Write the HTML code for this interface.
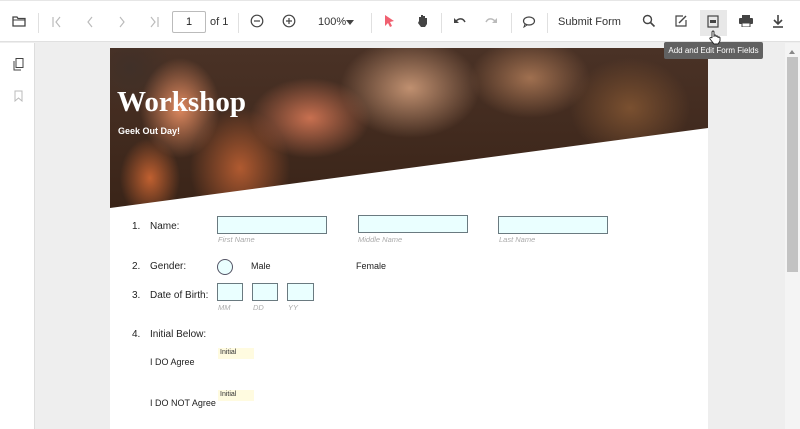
<!DOCTYPE html>
<html><head><style>
*{margin:0;padding:0;box-sizing:border-box}
body{width:800px;height:429px;overflow:hidden;background:#eeeeee;font-family:"Liberation Sans",sans-serif;position:relative}
.tb{position:absolute;left:0;top:0;width:800px;height:42px;background:#fff;border-bottom:1px solid #e0e0e0;border-top:1px solid #e6e6e6}
.ic{position:absolute;top:14px;color:#444;font-size:13px}
.sep{position:absolute;top:12px;width:1px;height:20px;background:#e0e0e0}
.side{position:absolute;left:0;top:43px;width:35px;height:386px;background:#fff;border-right:1px solid #ddd}
.page{position:absolute;left:110px;top:48px;width:598px;height:381px;background:#fff;overflow:hidden}
.hdr{position:absolute;left:0;top:0;width:598px;height:160px;background:
radial-gradient(ellipse 40px 50px at 70px 60px,#e08a60,transparent),
radial-gradient(ellipse 60px 40px at 200px 70px,#c87050,transparent),
radial-gradient(ellipse 50px 60px at 130px 120px,#b05a30,transparent),
radial-gradient(ellipse 30px 40px at 40px 130px,#c06030,transparent),
radial-gradient(ellipse 70px 50px at 300px 40px,#c09070,transparent),
radial-gradient(ellipse 60px 40px at 420px 30px,#a07050,transparent),
radial-gradient(ellipse 60px 50px at 520px 60px,#7a5030,transparent),
radial-gradient(ellipse 40px 40px at 20px 20px,#403028,transparent),
linear-gradient(180deg,#4a3226,#3a2418)}
.lbl{position:absolute;font-size:10px;color:#222}
.fld{position:absolute;background:#eaffff;border:1px solid #6a7a80}
.ph{position:absolute;font-size:7.5px;color:#aaa;font-style:italic}
.ini{position:absolute;width:36px;height:11px;background:#fffbe0;font-size:7px;color:#333;padding:1px 2px}
</style></head><body>
<div class="tb">
<svg style="position:absolute;left:12px;top:14px" width="14" height="12"><path d="M1 2h4l1 1.5h7v7.5H1z" fill="none" stroke="#444" stroke-width="1.3"/><path d="M1 5h12" stroke="#444"/></svg>
<div class="sep" style="left:38px"></div>
<svg style="position:absolute;left:52px;top:15px" width="10" height="12"><path d="M1 1v10M8 1L4 6l4 5" fill="none" stroke="#bbb" stroke-width="1.2"/></svg>
<svg style="position:absolute;left:86px;top:15px" width="8" height="12"><path d="M6 1L2 6l4 5" fill="none" stroke="#bbb" stroke-width="1.2"/></svg>
<svg style="position:absolute;left:118px;top:15px" width="8" height="12"><path d="M2 1l4 5-4 5" fill="none" stroke="#bbb" stroke-width="1.2"/></svg>
<svg style="position:absolute;left:149px;top:15px" width="10" height="12"><path d="M9 1v10M2 1l4 5-4 5" fill="none" stroke="#bbb" stroke-width="1.2"/></svg>
<div style="position:absolute;left:172px;top:10px;width:34px;height:22px;border:1px solid #bbb;border-radius:2px;font-size:11px;text-align:center;line-height:20px;color:#222">1</div>
<div class="ic" style="left:210px;font-size:11px;top:15px;color:#333">of 1</div>
<div class="sep" style="left:238px"></div>
<svg style="position:absolute;left:250px;top:13px" width="14" height="14"><circle cx="7" cy="7" r="5.8" fill="none" stroke="#444" stroke-width="1.2"/><path d="M4 7h6" stroke="#444" stroke-width="1.2"/></svg>
<svg style="position:absolute;left:282px;top:13px" width="14" height="14"><circle cx="7" cy="7" r="5.8" fill="none" stroke="#444" stroke-width="1.2"/><path d="M4 7h6M7 4v6" stroke="#444" stroke-width="1.2"/></svg>
<div class="ic" style="left:318px;font-size:11px;top:15px;color:#333">100%</div>
<div style="position:absolute;left:346px;top:19px;border:4.5px solid transparent;border-top:5px solid #444"></div>
<div class="sep" style="left:371px"></div>
<svg style="position:absolute;left:384px;top:13px" width="12" height="14"><path d="M1 1l9 6-4 1 2 4-2 1-2-4-3 3z" fill="#f06070"/></svg>
<svg style="position:absolute;left:416px;top:12px" width="14" height="15"><path d="M3 8V4h2v4V2h2v6V3h2v5V5h2v6l-2 3H5L2 10z" fill="#444"/></svg>
<div class="sep" style="left:441px"></div>
<svg style="position:absolute;left:453px;top:15px" width="13" height="10"><path d="M3 5c3-3 7-3 9 1" fill="none" stroke="#444" stroke-width="1.5"/><path d="M1 2v5h5z" fill="#444"/></svg>
<svg style="position:absolute;left:485px;top:15px" width="13" height="10"><path d="M10 5C7 2 3 2 1 6" fill="none" stroke="#bbb" stroke-width="1.5"/><path d="M12 2v5H7z" fill="#bbb"/></svg>
<div class="sep" style="left:511px"></div>
<svg style="position:absolute;left:522px;top:15px" width="14" height="12"><ellipse cx="7" cy="5" rx="5.5" ry="4" fill="none" stroke="#444" stroke-width="1.2"/><path d="M3 8l-1 3 3-2" fill="none" stroke="#444"/></svg>
<div class="sep" style="left:547px"></div>
<div class="ic" style="left:558px;font-size:11px;top:15px;color:#333">Submit Form</div>
<svg style="position:absolute;left:642px;top:13px" width="14" height="14"><circle cx="5.5" cy="5.5" r="4" fill="none" stroke="#444" stroke-width="1.4"/><path d="M8.5 8.5l4 4" stroke="#444" stroke-width="1.6"/></svg>
<svg style="position:absolute;left:674px;top:13px" width="14" height="14"><path d="M9 2H2v10h10V6" fill="none" stroke="#444" stroke-width="1.2"/><path d="M5 9l7-7" stroke="#444" stroke-width="1.4"/></svg>
<div style="position:absolute;left:700px;top:9px;width:27px;height:26px;background:#e8e8e8"></div>
<svg style="position:absolute;left:707px;top:14px" width="12" height="13"><rect x="1" y="1" width="10" height="11" fill="none" stroke="#444" stroke-width="1.2"/><rect x="3" y="5" width="6" height="3" fill="#444"/></svg>
<svg style="position:absolute;left:739px;top:14px" width="14" height="12"><rect x="3" y="0" width="8" height="3" fill="#444"/><rect x="0" y="3" width="14" height="6" rx="1" fill="#444"/><rect x="3" y="8" width="8" height="4" fill="#fff" stroke="#444"/></svg>
<svg style="position:absolute;left:772px;top:13px" width="12" height="14"><path d="M6 1v8M2 6l4 4 4-4" fill="none" stroke="#444" stroke-width="1.6"/><path d="M1 13h10" stroke="#444" stroke-width="1.6"/></svg>
</div>
<div class="side">
<svg style="position:absolute;left:13px;top:15px" width="11" height="13"><rect x="3" y="0.5" width="7" height="9" fill="none" stroke="#444"/><path d="M1 3v9h7" fill="none" stroke="#444"/></svg>
<svg style="position:absolute;left:14px;top:47px" width="9" height="12"><path d="M1 1h7v10l-3.5-3L1 11z" fill="none" stroke="#bbb"/></svg>
</div>
<div class="page">
<div class="hdr"></div>
<svg style="position:absolute;left:0;top:0" width="598" height="170"><polygon points="0,160 598,80 598,170 0,170" fill="#fff"/></svg>
<div style="position:absolute;left:7px;top:38px;font-family:'Liberation Serif',serif;font-weight:bold;font-size:29px;color:#fff">Workshop</div>
<div style="position:absolute;left:8px;top:78px;font-weight:bold;font-size:9px;color:#fff">Geek Out Day!</div>
<div class="lbl" style="left:22px;top:173px">1.</div><div class="lbl" style="left:40px;top:173px">Name:</div>
<div class="fld" style="left:107px;top:168px;width:110px;height:18px"></div>
<div class="fld" style="left:248px;top:167px;width:110px;height:18px"></div>
<div class="fld" style="left:388px;top:168px;width:110px;height:18px"></div>
<div class="ph" style="left:108px;top:187px">First Name</div>
<div class="ph" style="left:248px;top:187px">Middle Name</div>
<div class="ph" style="left:389px;top:187px">Last Name</div>
<div class="lbl" style="left:22px;top:213px">2.</div><div class="lbl" style="left:40px;top:213px">Gender:</div>
<div style="position:absolute;left:107px;top:211px;width:16px;height:16px;border-radius:50%;border:1px solid #556;background:#eaffff"></div>
<div class="lbl" style="left:141px;top:213px;font-size:9px">Male</div>
<div class="lbl" style="left:246px;top:213px;font-size:9px">Female</div>
<div class="lbl" style="left:22px;top:242px">3.</div><div class="lbl" style="left:40px;top:242px">Date of Birth:</div>
<div class="fld" style="left:107px;top:235px;width:26px;height:18px"></div>
<div class="fld" style="left:142px;top:235px;width:26px;height:18px"></div>
<div class="fld" style="left:177px;top:235px;width:27px;height:18px"></div>
<div class="ph" style="left:108px;top:255px">MM</div>
<div class="ph" style="left:143px;top:255px">DD</div>
<div class="ph" style="left:178px;top:255px">YY</div>
<div class="lbl" style="left:22px;top:281px">4.</div><div class="lbl" style="left:40px;top:281px">Initial Below:</div>
<div class="ini" style="left:108px;top:300px">Initial</div>
<div class="lbl" style="left:40px;top:309px;font-size:9px">I DO Agree</div>
<div class="ini" style="left:108px;top:342px">Initial</div>
<div class="lbl" style="left:40px;top:350px;font-size:9px">I DO NOT Agree</div>
</div>
<div style="position:absolute;left:785px;top:43px;width:15px;height:386px;background:#f4f4f4"></div>
<div style="position:absolute;left:787px;top:57px;width:11px;height:215px;background:#c2c2c2"></div>
<div style="position:absolute;left:789px;top:47px;border:3px solid transparent;border-bottom:4px solid #888"></div>
<div style="position:absolute;left:664px;top:42px;width:99px;height:17px;background:#616161;border-radius:2px;color:#fff;font-size:8px;line-height:17px;text-align:center">Add and Edit Form Fields</div>
<svg style="position:absolute;left:709px;top:30px" width="12" height="15"><path d="M3 8V2a1 1 0 012 0v5V6a1 1 0 012 0v1a1 1 0 012 0v1a1 1 0 012 0v3l-2 3H5L1 9a1 1 0 012-1z" fill="#fff" stroke="#222" stroke-width="0.9"/></svg>
</body></html>
